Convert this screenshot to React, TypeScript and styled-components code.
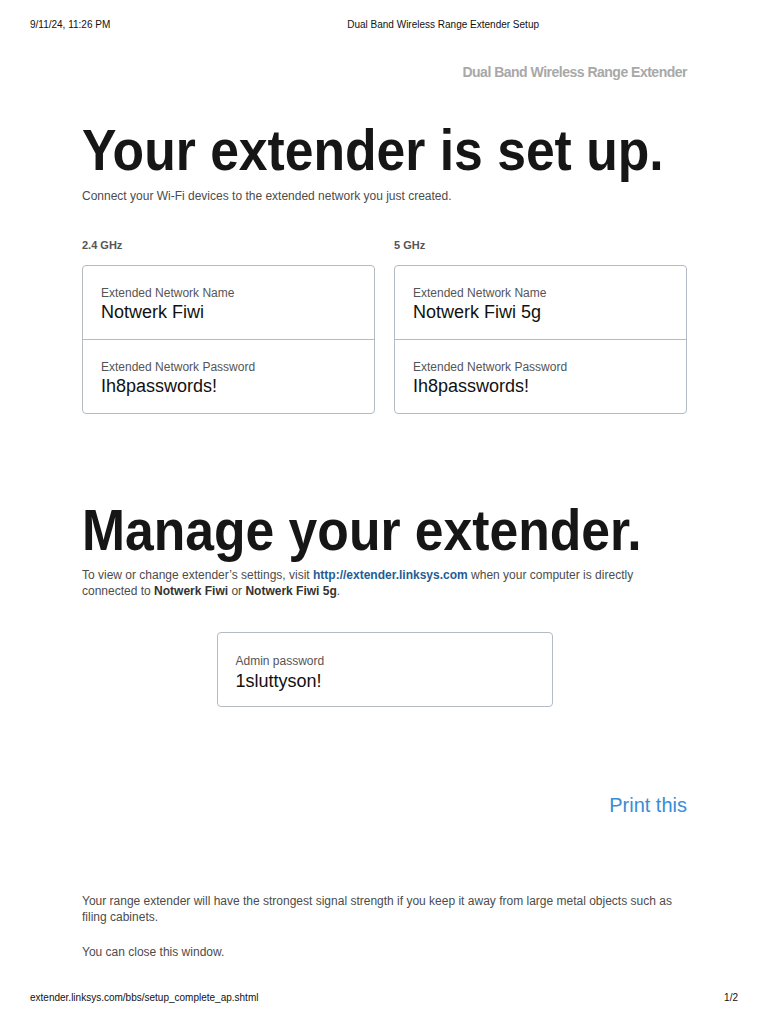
import styled, { createGlobalStyle } from "styled-components";

const GlobalStyle = createGlobalStyle`
  html, body {
    margin: 0;
    padding: 0;
    background: #ffffff;
    font-family: "Liberation Sans", Arial, sans-serif;
  }
`;

const Page = styled.div`
  width: 768px;
  height: 1024px;
  display: flex;
  flex-direction: column;
  box-sizing: border-box;
  overflow: hidden;
`;

const PrintBar = styled.div<{ $top?: boolean }>`
  display: flex;
  align-items: center;
  justify-content: space-between;
  padding: ${(p) => (p.$top ? "19px 30px 0" : "0 30px 20px")};
  margin-top: ${(p) => (p.$top ? "0" : "auto")};
  font-size: 10px;
  line-height: 12px;
  color: #111;
`;

const PrintTitle = styled.span`
  flex: 1;
  text-align: center;
  padding-left: 38px;
`;

const Content = styled.main`
  padding: 0 81px 0 82px;
  display: flex;
  flex-direction: column;
`;

const Brand = styled.div`
  margin-top: 33px;
  text-align: right;
  font-size: 14px;
  line-height: 16px;
  font-weight: bold;
  color: #a8a8a8;
  letter-spacing: -0.5px;
`;

const Heading = styled.h1<{ $gap: number }>`
  margin: ${(p) => p.$gap}px 0 0;
  font-size: 57px;
  line-height: 58px;
  font-weight: bold;
  color: #161616;
  white-space: nowrap;
  transform: scaleX(0.906);
  transform-origin: left center;
`;

const Text = styled.p<{ $gap: number }>`
  margin: ${(p) => p.$gap}px 0 0;
  font-size: 12px;
  line-height: 16px;
  color: #4c4c4c;
`;

const Link = styled.a`
  color: #1f5d96;
  font-weight: bold;
  text-decoration: none;
`;

const Strong = styled.b`
  color: #333;
`;

const Bands = styled.div`
  margin-top: 34px;
  display: grid;
  grid-template-columns: 1fr 1fr;
  column-gap: 19px;
`;

const Band = styled.section`
  display: flex;
  flex-direction: column;
`;

const BandLabel = styled.div`
  font-size: 11px;
  line-height: 14px;
  font-weight: bold;
  color: #555;
  margin-bottom: 13px;
`;

const Card = styled.div<{ $width?: number }>`
  border: 1px solid #b3bcc4;
  border-radius: 4px;
  width: ${(p) => (p.$width ? `${p.$width}px` : "auto")};
  box-sizing: border-box;
`;

const Field = styled.div<{ $roomy?: boolean }>`
  padding: ${(p) => (p.$roomy ? "21px 18px 14px" : "20px 18px 16px")};
  & + & {
    border-top: 1px solid #b3bcc4;
  }
`;

const FieldLabel = styled.div`
  font-size: 12px;
  line-height: 14px;
  color: #555;
`;

const FieldValue = styled.div<{ $roomy?: boolean }>`
  margin-top: ${(p) => (p.$roomy ? "2px" : "1px")};
  font-size: 18px;
  line-height: 22px;
  color: #111;
`;

const AdminWrap = styled.div`
  margin-top: 33px;
  display: flex;
  justify-content: center;
`;

const PrintLink = styled.a`
  margin-top: 86px;
  align-self: flex-end;
  font-size: 20px;
  line-height: 24px;
  color: #3a8dd6;
  text-decoration: none;
`;

const networks = [
  { band: "2.4 GHz", name: "Notwerk Fiwi", password: "Ih8passwords!" },
  { band: "5 GHz", name: "Notwerk Fiwi 5g", password: "Ih8passwords!" },
];

export default function App() {
  return (
    <>
      <GlobalStyle />
      <Page>
        <PrintBar $top>
          <span>9/11/24, 11:26 PM</span>
          <PrintTitle>Dual Band Wireless Range Extender Setup</PrintTitle>
        </PrintBar>
        <Content>
          <Brand>Dual Band Wireless Range Extender</Brand>
          <Heading $gap={41}>Your extender is set up.</Heading>
          <Text $gap={9}>Connect your Wi-Fi devices to the extended network you just created.</Text>
          <Bands>
            {networks.map((n) => (
              <Band key={n.band}>
                <BandLabel>{n.band}</BandLabel>
                <Card>
                  <Field>
                    <FieldLabel>Extended Network Name</FieldLabel>
                    <FieldValue>{n.name}</FieldValue>
                  </Field>
                  <Field>
                    <FieldLabel>Extended Network Password</FieldLabel>
                    <FieldValue>{n.password}</FieldValue>
                  </Field>
                </Card>
              </Band>
            ))}
          </Bands>
          <Heading $gap={87}>Manage your extender.</Heading>
          <Text $gap={8}>
            To view or change extender’s settings, visit{" "}
            <Link href="#">http://extender.linksys.com</Link> when your computer is directly
            connected to <Strong>Notwerk Fiwi</Strong> or <Strong>Notwerk Fiwi 5g</Strong>.
          </Text>
          <AdminWrap>
            <Card $width={336}>
              <Field $roomy>
                <FieldLabel>Admin password</FieldLabel>
                <FieldValue $roomy>1sluttyson!</FieldValue>
              </Field>
            </Card>
          </AdminWrap>
          <PrintLink href="#">Print this</PrintLink>
          <Text $gap={76}>
            Your range extender will have the strongest signal strength if you keep it away from
            large metal objects such as filing cabinets.
          </Text>
          <Text $gap={19}>You can close this window.</Text>
        </Content>
        <PrintBar>
          <span>extender.linksys.com/bbs/setup_complete_ap.shtml</span>
          <span>1/2</span>
        </PrintBar>
      </Page>
    </>
  );
}
